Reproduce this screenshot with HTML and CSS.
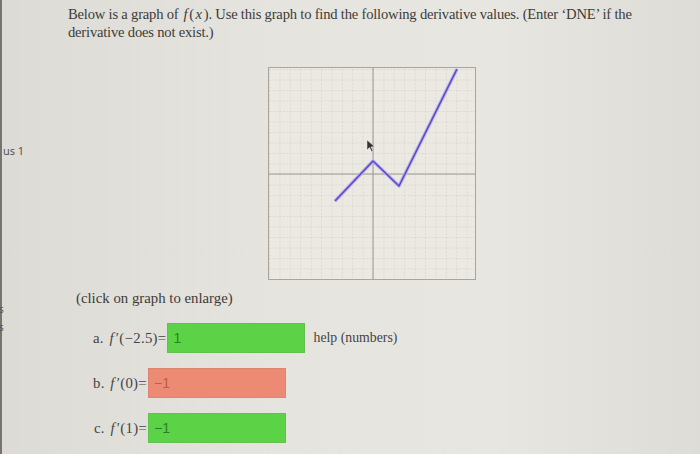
FILE: index.html
```html
<!DOCTYPE html>
<html>
<head>
<meta charset="utf-8">
<link rel="stylesheet" href="styles.css">
</head>
<body>
<div class="page">
  <aside class="side">
    <div class="side-label">us 1</div>
    <div class="side-mark m1">s</div>
    <div class="side-mark m2">s</div>
  </aside>
  <main class="main">
    <p class="intro"><span class="ln">Below is a graph of <i class="m">f</i>(<i class="m">x</i>). Use this graph to find the following derivative values. (Enter ‘DNE’ if the</span><span class="ln">derivative does not exist.)</span></p>
    <div class="graph">
      <svg width="208" height="213" viewBox="0 0 208 213">
        <defs>
          <pattern id="g" x="1" y="2" width="10.4" height="10.5" patternUnits="userSpaceOnUse">
            <path d="M0 0 V10.5 M0 0 H10.4" stroke="#cdc9c0" stroke-width="1" stroke-dasharray="2 1.5" fill="none"/>
          </pattern>
        </defs>
        <rect x="0.5" y="0.5" width="207" height="212" fill="#ece9e3" stroke="#a9a59d"/>
        <rect x="1" y="1" width="206" height="211" fill="url(#g)"/>
        <line x1="105" y1="1" x2="105" y2="212" stroke="#9c978f" stroke-width="1"/>
        <line x1="1" y1="107" x2="207" y2="107" stroke="#9c978f" stroke-width="1"/>
        <polyline points="67,134 105,94 131,119 189,2" fill="none" stroke="#b8b0ee" stroke-width="3.5" stroke-linejoin="round"/>
        <polyline points="67,134 105,94 131,119 189,2" fill="none" stroke="#5a4bc8" stroke-width="1.6" stroke-linejoin="round"/>
        <path d="M99 73 L99 83 L101.5 80.5 L103.5 84.5 L105 83.8 L103 80 L106.5 79.5 Z" fill="#333" stroke="#eee" stroke-width="0.5"/>
      </svg>
    </div>
    <p class="enlarge">(click on graph to enlarge)</p>
    <div class="rows">
      <div class="row ra">
        <span class="lbl">a. <i class="m">f</i>′(−2.5)=</span>
        <span class="box good">1</span>
        <span class="help">help (numbers)</span>
      </div>
      <div class="row rb">
        <span class="lbl">b. <i class="m">f</i>′(0)=</span>
        <span class="box bad">−1</span>
      </div>
      <div class="row rc">
        <span class="lbl">c. <i class="m">f</i>′(1)=</span>
        <span class="box good">−1</span>
      </div>
    </div>
  </main>
</div>
</body>
</html>
```
FILE: styles.css
```css
html, body {
  margin: 0;
  padding: 0;
}
body {
  width: 700px;
  height: 454px;
  overflow: hidden;
  background: #e3e1dc;
  font-family: "Liberation Serif", "Times New Roman", serif;
  color: #3d3b38;
}
.page {
  display: flex;
  height: 454px;
  border-left: 2px solid #77746f;
  box-sizing: border-box;
  background: linear-gradient(90deg, #dddbd6 0%, #e6e4df 40%, #e8e6e1 70%, #dedcd7 100%);
}
.side {
  width: 66px;
  flex: none;
  font-family: "Open Sans", "DejaVu Sans", sans-serif;
  color: #4a4a4a;
  display: flex;
  flex-direction: column;
}
.side-label {
  margin-top: 144px;
  font-size: 11px;
  line-height: 14px;
  padding-left: 1px;
}
.side-mark {
  font-size: 10px;
  line-height: 12px;
  color: #555;
  margin-left: -3px;
}
.m1 { margin-top: 145px; }
.m2 { margin-top: 6px; }
.main {
  flex: 1;
  display: flex;
  flex-direction: column;
}
.m {
  display: inline-block;
  padding: 0 2px 0 1.5px;
}
.intro {
  margin: 5px 0 0 0;
  width: 600px;
  font-size: 14.6px;
  line-height: 18px;
  letter-spacing: -0.2px;
}
.ln {
  display: block;
  white-space: nowrap;
}
.graph {
  margin: 26px 0 0 200px;
  height: 213px;
}
.graph svg { display: block; }
.enlarge {
  margin: 9px 0 0 8px;
  font-size: 14.8px;
  line-height: 18px;
}
.rows {
  display: flex;
  flex-direction: column;
  gap: 15px;
  margin-top: 16px;
}
.row {
  display: flex;
  align-items: center;
  height: 30px;
  font-size: 14.8px;
}
.ra { padding-left: 25px; }
.rb { padding-left: 25px; }
.rc { padding-left: 26px; }
.lbl {
  white-space: nowrap;
  color: #444;
  letter-spacing: 0.3px;
}
.box {
  display: flex;
  align-items: center;
  box-sizing: border-box;
  width: 138px;
  height: 30px;
  padding-left: 5px;
  font-family: "Liberation Sans", Arial, sans-serif;
  font-size: 14px;
  margin-left: 1px;
}
.good {
  background: #5cd246;
  border: 1px solid #63c050;
  color: #2f7d27;
}
.bad {
  background: #ec8a74;
  border: 1px solid #dc8570;
  color: #c25a45;
}
.help {
  margin-left: 8px;
  font-size: 13.8px;
  color: #444;
}
```
